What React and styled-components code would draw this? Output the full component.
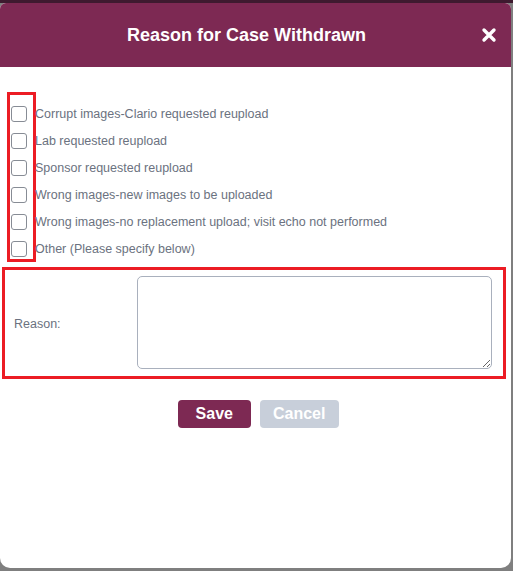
import React from "react";
import styled, { createGlobalStyle } from "styled-components";

const GlobalStyle = createGlobalStyle`
  html, body {
    margin: 0;
    padding: 0;
  }
  body {
    font-family: "Liberation Sans", Arial, sans-serif;
  }
`;

const Backdrop = styled.div`
  width: 513px;
  height: 571px;
  padding-top: 3px;
  box-sizing: border-box;
  background: linear-gradient(#3e1a2f 0 3px, #7f7f7f 3px);
`;

const Modal = styled.div`
  width: 511px;
  height: 565px;
  background: #ffffff;
  border-radius: 6px 6px 10px 10px;
  overflow: hidden;
  display: flex;
  flex-direction: column;
`;

const Header = styled.div`
  height: 64px;
  background: #7d2953;
  display: flex;
  align-items: center;
  justify-content: center;
  position: relative;
`;

const Title = styled.h2`
  margin: 0 0 0 -18px;
  color: #ffffff;
  font-size: 18px;
  font-weight: bold;
`;

const Close = styled.button`
  position: absolute;
  right: 14px;
  top: 24px;
  background: none;
  border: 0;
  padding: 0;
  width: 16px;
  height: 16px;
  cursor: pointer;
`;

const Body = styled.div`
  padding: 34px 5px 0 2px;
  display: flex;
  flex-direction: column;
`;

const CheckGroup = styled.div`
  display: flex;
  flex-direction: column;
  gap: 11px;
  margin-left: 9px;
  padding: 5px 0 3px;
  position: relative;
`;

const Highlight = styled.div`
  position: absolute;
  left: -4px;
  top: -9px;
  width: 23px;
  height: 164px;
  border: 3px solid #ec1c24;
`;

const Option = styled.label`
  display: flex;
  align-items: center;
  height: 16px;
  font-size: 12.5px;
  color: #6b7280;
  position: relative;
`;

const Box = styled.span`
  width: 14px;
  height: 14px;
  border: 1px solid #878c95;
  border-radius: 3px;
  background: #fff;
  margin-right: 8px;
  flex: none;
`;

const ReasonRow = styled.div`
  margin-top: 7px;
  border: 3px solid #ec1c24;
  height: 106px;
  display: flex;
  align-items: center;
  padding: 0 8px 0 9px;
`;

const Label = styled.span`
  width: 123px;
  font-size: 12.5px;
  color: #6b7280;
  margin-top: 2px;
`;

const TextArea = styled.textarea`
  width: 355px;
  height: 93px;
  box-sizing: border-box;
  border: 1px solid #a9b0bd;
  border-radius: 5px;
  resize: vertical;
  font-family: inherit;
  margin: 0 0 2px;
`;

const Actions = styled.div`
  display: flex;
  justify-content: center;
  gap: 9px;
  margin-top: 21px;
  padding-left: 9px;
`;

const Button = styled.button`
  height: 28px;
  padding: ${(p) => (p.$muted ? "0 14px 0 13px" : "0 18px")};
  border: 0;
  border-radius: 4px;
  background: ${(p) => (p.$muted ? "#c8cfda" : "#7d2953")};
  color: #ffffff;
  font-family: "Liberation Sans", Arial, sans-serif;
  font-size: 16px;
  font-weight: bold;
  cursor: pointer;
`;

const options = [
  "Corrupt images-Clario requested reupload",
  "Lab requested reupload",
  "Sponsor requested reupload",
  "Wrong images-new images to be uploaded",
  "Wrong images-no replacement upload; visit echo not performed",
  "Other (Please specify below)",
];

function App() {
  return (
    <Backdrop>
      <GlobalStyle />
      <Modal>
        <Header>
          <Title>Reason for Case Withdrawn</Title>
          <Close aria-label="Close">
            <svg width="16" height="16" viewBox="0 0 16 16">
              <path
                d="M3 3 L13 13 M13 3 L3 13"
                stroke="#ffffff"
                strokeWidth="3.4"
                strokeLinecap="round"
              />
            </svg>
          </Close>
        </Header>
        <Body>
          <CheckGroup>
            <Highlight />
            {options.map((text) => (
              <Option key={text}>
                <Box />
                {text}
              </Option>
            ))}
          </CheckGroup>
          <ReasonRow>
            <Label>Reason:</Label>
            <TextArea />
          </ReasonRow>
          <Actions>
            <Button>Save</Button>
            <Button $muted>Cancel</Button>
          </Actions>
        </Body>
      </Modal>
    </Backdrop>
  );
}

export default App;
